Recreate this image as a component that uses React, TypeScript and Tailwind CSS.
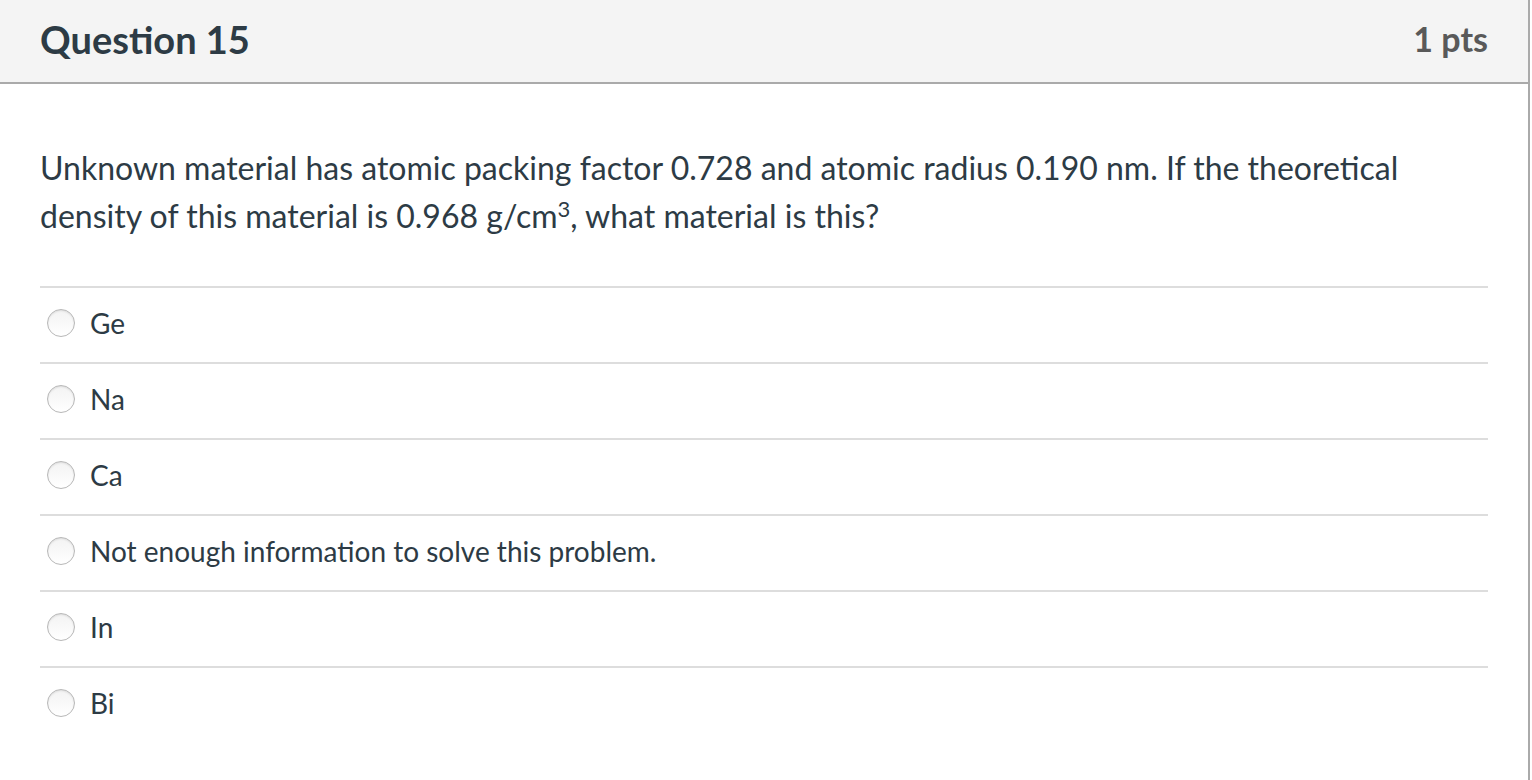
const answers = ['Ge', 'Na', 'Ca', 'Not enough information to solve this problem.', 'In', 'Bi'];

function Radio() {
  return (
    <span className="inline-block h-[28px] w-[28px] shrink-0 rounded-full border border-[#b8b8b8] bg-gradient-to-b from-[#f3f3f3] to-white shadow-[inset_0_1px_2px_rgba(0,0,0,0.1)]" />
  );
}

export default function App() {
  return (
    <div className="min-h-[780px] w-[1530px] border-r-2 border-[#aaaaaa] bg-white font-['Lato','Liberation_Sans',sans-serif] text-[#2d3b45]">
      {/* Question header */}
      <div className="flex h-[84px] items-center justify-between border-b-2 border-[#aaaaaa] bg-[#f4f4f4] px-10 pb-1">
        <h2 className="text-[38px] font-bold leading-none">Question 15</h2>
        <span className="text-[34px] font-bold leading-none text-[#595959]">1 pts</span>
      </div>

      {/* Question body */}
      <div className="px-10 pt-[60px]">
        <p className="text-[32px] leading-[48px]">
          Unknown material has atomic packing factor 0.728 and atomic radius 0.190 nm. If the theoretical density of this
          material is 0.968 g/cm<sup className="text-[22px]">3</sup>, what material is this?
        </p>

        <div className="mt-[46px]">
          {answers.map((a) => (
            <label key={a} className="flex h-[76px] items-center gap-[15px] border-t-2 border-[#dddddd] pb-[4px] pl-[7px]">
              <Radio />
              <span className="text-[28px] leading-none">{a}</span>
            </label>
          ))}
        </div>
      </div>
    </div>
  );
}
